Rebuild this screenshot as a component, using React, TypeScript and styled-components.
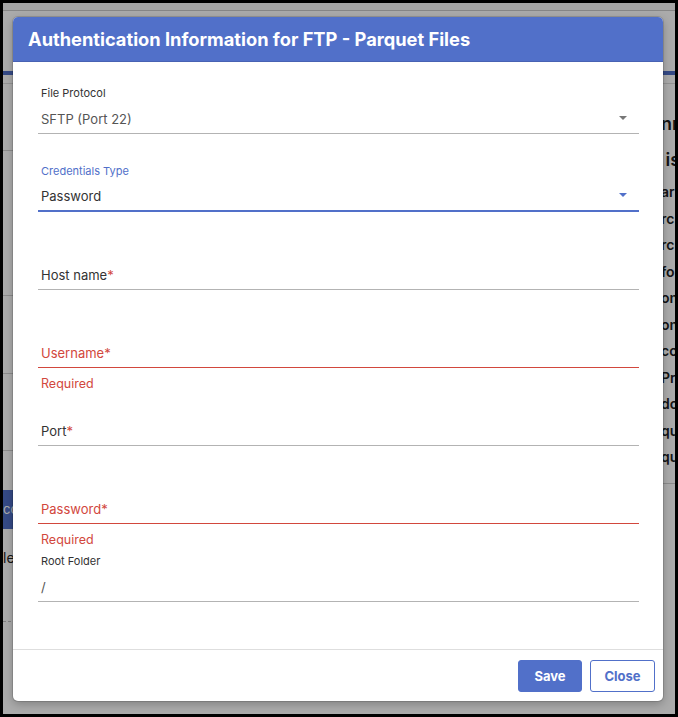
import React from "react";
import styled, { createGlobalStyle } from "styled-components";

const GlobalStyle = createGlobalStyle`
  html, body {
    margin: 0;
    padding: 0;
    background: #000;
  }
  * {
    box-sizing: border-box;
  }
`;

const BLUE = "#5170c9";
const RED = "#d2473d";

interface FieldProps {
  label: string;
  value?: string;
  required?: boolean;
  select?: boolean;
  focused?: boolean;
  error?: string;
}

const Frame = styled.div`
  position: relative;
  width: 678px;
  height: 717px;
  border: 3px solid #000;
  background: #fff;
  overflow: hidden;
  font-family: Inter, "Liberation Sans", sans-serif;
`;

const Page = styled.div`
  display: flex;
  flex-direction: column;
  height: 100%;
`;

const TopBar = styled.div`
  height: 8px;
  background: #f6f6f6;
  border-bottom: 1px solid #c8c8c8;
`;

const PageHeader = styled.div`
  height: 60px;
`;

const BlueRule = styled.div`
  height: 4px;
  background: #4f6fc8;
`;

const GreyRule = styled.div`
  margin-top: 8px;
  height: 1px;
  background: #dcdcdc;
`;

const Columns = styled.div`
  display: grid;
  grid-template-columns: 1fr 14px;
  flex: 1;
`;

const LeftPane = styled.div`
  display: flex;
  flex-direction: column;
  overflow: hidden;
`;

const PaneRow = styled.div<{ $h: number }>`
  height: ${(p) => p.$h}px;
  border-bottom: 1px solid #d0d0d0;
`;

const PaneButton = styled.div`
  margin-top: 39px;
  height: 39px;
  width: 140px;
  background: #4f6fc8;
  color: #fff;
  font-size: 13px;
  line-height: 39px;
  white-space: nowrap;
`;

const PaneText = styled.div`
  margin-top: 20px;
  font-size: 14px;
  color: #222;
  white-space: nowrap;
`;

const DashedRule = styled.div`
  margin-top: 55px;
  border-top: 1px dashed #c0c0c0;
`;

const RightPane = styled.div`
  display: flex;
  flex-direction: column;
  overflow: hidden;
`;

const SideHeading = styled.div<{ $mt: number }>`
  margin-top: ${(p) => p.$mt}px;
  font-size: 18px;
  line-height: 22px;
  font-weight: 600;
  color: #222;
  white-space: nowrap;
`;

const SideLine = styled.div<{ $mt?: number }>`
  margin-top: ${(p) => p.$mt ?? 0}px;
  font-size: 14px;
  line-height: 26.5px;
  font-weight: 600;
  color: #222;
  white-space: nowrap;
`;

const SideRule = styled.div`
  margin-top: 12px;
  border-top: 1px solid #d0d0d0;
`;

const Backdrop = styled.div`
  position: absolute;
  inset: 0;
  background: rgba(0, 0, 0, 0.33);
  display: flex;
  align-items: flex-start;
  justify-content: flex-start;
  padding: 14px 0 0 10px;
`;

const Modal = styled.div`
  width: 650px;
  height: 684px;
  background: #fff;
  border-radius: 5px;
  box-shadow: 0 0 0 1px rgba(0, 0, 0, 0.12), 0 3px 10px rgba(0, 0, 0, 0.25);
  display: flex;
  flex-direction: column;
  overflow: hidden;
`;

const ModalHeader = styled.div`
  height: 45px;
  background: ${BLUE};
  border-bottom: 1px solid #4862b3;
  color: #fff;
  font-size: 18.25px;
  font-weight: 700;
  padding: 0 15px;
  display: flex;
  align-items: center;
`;

const ModalBody = styled.div`
  flex: 1;
  padding: 23px 24px 0 25px;
  display: flex;
  flex-direction: column;
`;

const FieldWrap = styled.div`
  display: flex;
  flex-direction: column;
  height: 78px;
`;

const SmallLabel = styled.div<{ $color: string }>`
  height: 16px;
  line-height: 16px;
  font-size: 11px;
  padding-left: 3px;
  color: ${(p) => p.$color};
  margin-bottom: 1px;
`;

const InputRow = styled.div<{ $line: string; $thick: boolean }>`
  height: 32px;
  display: flex;
  align-items: center;
  padding-left: 3px;
  padding-right: 12px;
  border-bottom: ${(p) => (p.$thick ? 2 : 1)}px solid ${(p) => p.$line};
`;

const ValueText = styled.span<{ $color: string }>`
  flex: 1;
  font-size: 13px;
  color: ${(p) => p.$color};
  padding-top: 2px;
`;

const Star = styled.span`
  color: ${RED};
`;

const Arrow = styled.span<{ $color: string }>`
  width: 0;
  height: 0;
  border-left: 4px solid transparent;
  border-right: 4px solid transparent;
  border-top: 4px solid ${(p) => p.$color};
`;

const Helper = styled.div`
  margin-top: 6px;
  padding-left: 3px;
  font-size: 12.5px;
  line-height: 20px;
  color: ${RED};
`;

const ModalFooter = styled.div`
  height: 52px;
  border-top: 1px solid #dedede;
  display: flex;
  justify-content: flex-end;
  align-items: center;
  gap: 8px;
  padding-right: 8px;
`;

const Button = styled.button<{ $primary?: boolean }>`
  height: 32px;
  padding: 0;
  border-radius: 3px;
  font-family: Inter, "Liberation Sans", sans-serif;
  font-size: 13px;
  font-weight: 700;
  border: 1px solid ${BLUE};
  background: ${(p) => (p.$primary ? BLUE : "#fff")};
  color: ${(p) => (p.$primary ? "#fff" : BLUE)};
  width: ${(p) => (p.$primary ? 64 : 65)}px;
`;

function Field({ label, value, required, select, focused, error }: FieldProps) {
  const line = error ? RED : focused ? BLUE : "#b3b3b3";
  const shrunk = value !== undefined;
  return (
    <FieldWrap>
      <SmallLabel $color={focused ? BLUE : "#333"}>{shrunk ? label : ""}</SmallLabel>
      <InputRow $line={line} $thick={!!focused}>
        <ValueText $color={error ? RED : shrunk && !focused ? "#555" : "#333"}>
          {shrunk ? (
            value
          ) : (
            <>
              {label}
              {required && <Star>*</Star>}
            </>
          )}
        </ValueText>
        {select && <Arrow $color={focused ? BLUE : "#777"} />}
      </InputRow>
      {error && <Helper>{error}</Helper>}
    </FieldWrap>
  );
}

export default function App() {
  return (
    <Frame>
      <GlobalStyle />
      <Page>
        <TopBar />
        <PageHeader />
        <BlueRule />
        <GreyRule />
        <Columns>
          <LeftPane>
            <PaneRow $h={67} />
            <PaneRow $h={145} />
            <PaneRow $h={78} />
            <PaneRow $h={77} />
            <PaneButton>co</PaneButton>
            <PaneText>le</PaneText>
            <DashedRule />
          </LeftPane>
          <RightPane>
            <SideHeading $mt={29}>nn</SideHeading>
            <SideHeading $mt={14}>&nbsp;is</SideHeading>
            <SideLine $mt={8}>ar</SideLine>
            <SideLine>rc</SideLine>
            <SideLine>rc</SideLine>
            <SideLine>for</SideLine>
            <SideLine>on</SideLine>
            <SideLine>on</SideLine>
            <SideLine>co</SideLine>
            <SideLine>Pro</SideLine>
            <SideLine>do</SideLine>
            <SideLine>qu</SideLine>
            <SideLine>qu</SideLine>
            <SideRule />
          </RightPane>
        </Columns>
      </Page>
      <Backdrop>
        <Modal>
          <ModalHeader>Authentication Information for FTP - Parquet Files</ModalHeader>
          <ModalBody>
            <Field label="File Protocol" value="SFTP (Port 22)" select />
            <Field label="Credentials Type" value="Password" select focused />
            <Field label="Host name" required />
            <Field label="Username" required error="Required" />
            <Field label="Port" required />
            <Field label="Password" required error="Required" />
            <Field label="Root Folder" value="/" />
          </ModalBody>
          <ModalFooter>
            <Button $primary>Save</Button>
            <Button>Close</Button>
          </ModalFooter>
        </Modal>
      </Backdrop>
    </Frame>
  );
}
